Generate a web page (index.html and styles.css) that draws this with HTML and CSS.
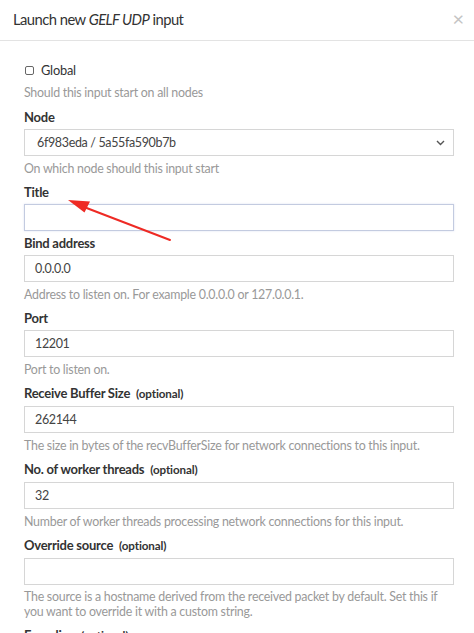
FILE: index.html
```html
<!DOCTYPE html>
<html>
<head>
<meta charset="utf-8">
<link rel="stylesheet" href="styles.css">
</head>
<body>
<div class="modal">
  <div class="header">
    <h4 class="title">Launch new <em>GELF UDP</em> input</h4>
    <span class="close">×</span>
  </div>
  <div class="body">
    <div class="check-row"><span class="checkbox"></span><span class="check-label">Global</span></div>
    <div class="help first">Should this input start on all nodes</div>

    <div class="group">
      <div class="label">Node</div>
      <div class="input select"><span>6f983eda / 5a55fa590b7b</span>
        <svg class="chev" width="9" height="6" viewBox="0 0 9 6"><path d="M1 1 L4.5 4.5 L8 1" fill="none" stroke="#555" stroke-width="1.4"/></svg>
      </div>
      <div class="help">On which node should this input start</div>
    </div>

    <div class="group">
      <div class="label">Title</div>
      <div class="input focus"></div>
    </div>

    <div class="group">
      <div class="label">Bind address</div>
      <div class="input">0.0.0.0</div>
      <div class="help">Address to listen on. For example 0.0.0.0 or 127.0.0.1.</div>
    </div>

    <div class="group">
      <div class="label">Port</div>
      <div class="input">12201</div>
      <div class="help">Port to listen on.</div>
    </div>

    <div class="group">
      <div class="label">Receive Buffer Size <small>(optional)</small></div>
      <div class="input">262144</div>
      <div class="help">The size in bytes of the recvBufferSize for network connections to this input.</div>
    </div>

    <div class="group">
      <div class="label">No. of worker threads <small>(optional)</small></div>
      <div class="input">32</div>
      <div class="help">Number of worker threads processing network connections for this input.</div>
    </div>

    <div class="group">
      <div class="label">Override source <small>(optional)</small></div>
      <div class="input"></div>
      <div class="help two">The source is a hostname derived from the received packet by default. Set this if you want to override it with a custom string.</div>
    </div>

    <div class="group">
      <div class="label">Encoding <small>(optional)</small></div>
    </div>
  </div>
  <svg class="arrow" width="474" height="633" viewBox="0 0 474 633">
    <path d="M170 240 L84 207" stroke="#ee2a24" stroke-width="2" fill="none" stroke-linecap="round"/>
    <path d="M68 200 L90 201.5 L84.5 212.5 Z" fill="#ee2a24"/>
  </svg>
</div>
</body>
</html>
```
FILE: styles.css
```css
html, body {
  margin: 0;
  padding: 0;
  background: #fff;
}
body {
  font-family: "Source Sans Pro", Lato, "Noto Sans", sans-serif;
  color: #333;
  font-size: 14px;
  overflow: hidden;
}
.modal {
  position: relative;
  width: 474px;
  height: 633px;
  overflow: hidden;
}
.header {
  height: 40px;
  border-bottom: 1px solid #e3e3e3;
  display: flex;
  align-items: center;
  justify-content: space-between;
  padding: 0 10px 0 13px;
}
.title {
  margin: 0;
  font-size: 14.8px;
  letter-spacing: -0.55px;
  font-weight: 400;
  color: #333;
  line-height: 22px;
  padding-bottom: 2px;
}
.title em {
  font-style: italic;
}
.close {
  font-size: 20px;
  color: #c4c4c4;
  line-height: 20px;
  padding-bottom: 5px;
}
.body {
  display: flex;
  flex-direction: column;
  padding: 20px 20px 0 24px;
}
.check-row {
  display: flex;
  align-items: center;
  height: 18px;
}
.checkbox {
  box-sizing: border-box;
  width: 9px;
  height: 9px;
  border: 1px solid #666;
  border-radius: 2px;
  margin: 0 7px 0 1px;
}
.check-label {
  font-size: 12.8px;
  letter-spacing: -0.2px;
  color: #333;
}
.help {
  color: #999;
  font-size: 12.4px;
  letter-spacing: -0.25px;
  line-height: 15px;
  margin-top: 5px;
  margin-bottom: 4px;
}
.help.first {
  margin-top: 6px;
  margin-bottom: 5px;
}
.help.two {
  margin-top: 4px;
}
.group {
  display: flex;
  flex-direction: column;
  margin-top: 3px;
}
.label {
  font-weight: 700;
  font-size: 13px;
  letter-spacing: -0.25px;
  line-height: 18px;
  color: #333;
  margin-bottom: 3px;
}
.label small {
  font-size: 11.6px;
  letter-spacing: -0.1px;
  margin-left: 3px;
}
.input {
  box-sizing: border-box;
  height: 27px;
  border: 1px solid #d6d6d6;
  padding: 0 10px;
  display: flex;
  align-items: center;
  font-size: 12.5px;
  letter-spacing: -0.35px;
  color: #444;
}
.select {
  justify-content: space-between;
  padding: 0 8px 0 12px;
}
.focus {
  border-color: #c3cbe0;
  box-shadow: 0 0 2px rgba(120, 140, 200, 0.25);
}
.arrow {
  position: absolute;
  left: 0;
  top: 0;
  pointer-events: none;
}
```
